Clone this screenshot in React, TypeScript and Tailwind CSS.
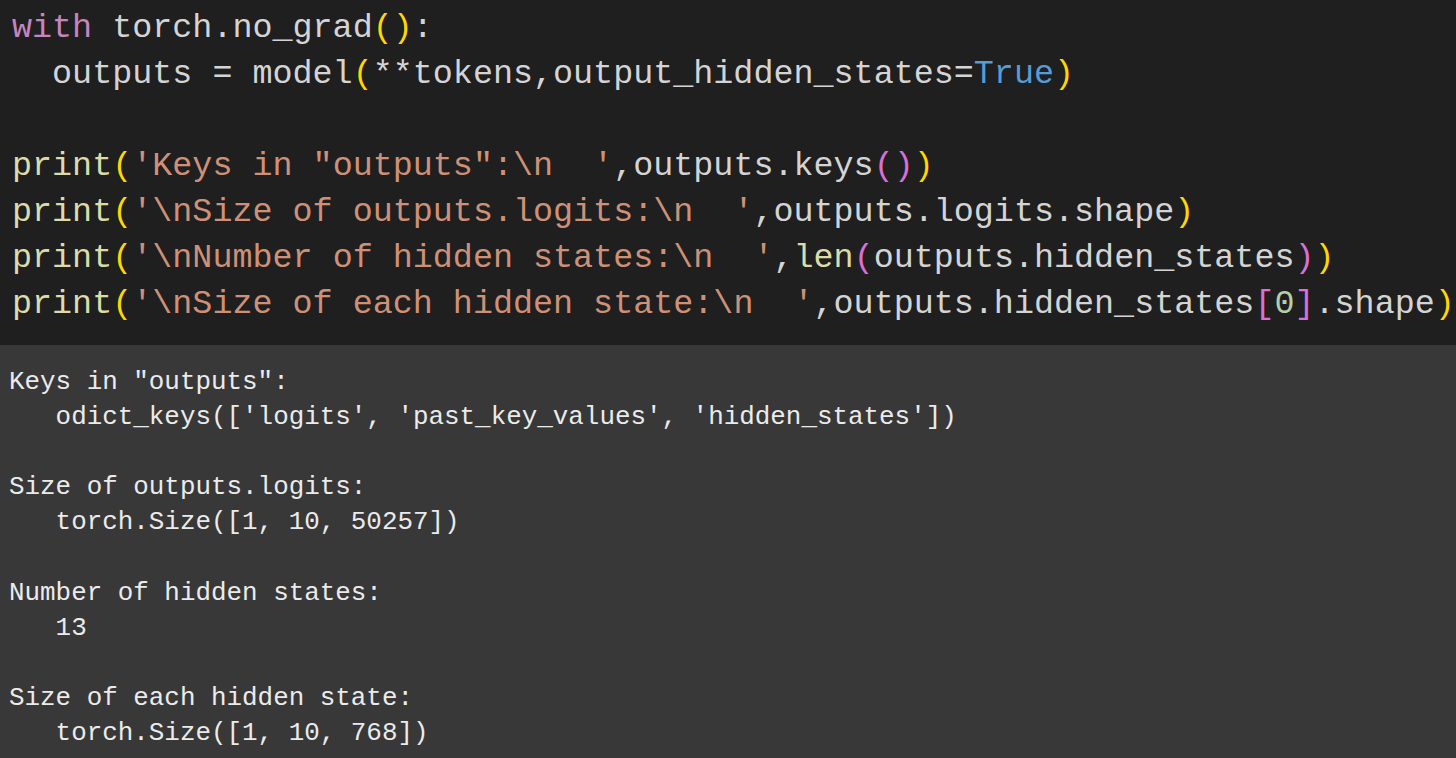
import React from "react";

const Y = "text-[#ffd700]";
const P = "text-[#da70d6]";
const S = "text-[#ce9178]";
const F = "text-[#dcdcaa]";
const K = "text-[#c586c0]";
const B = "text-[#569cd6]";
const N = "text-[#b5cea8]";

export default function App() {
  return (
    <div className="w-[1456px] h-[758px] overflow-hidden flex flex-col bg-[#383838]" style={{ fontFamily: '"Liberation Mono", "DejaVu Sans Mono", monospace' }}>
      <div className="bg-[#1f1f1f] pt-[5px] pl-[12px] h-[345px] shrink-0 text-[#d4d4d4] text-[33.4px] leading-[46px] whitespace-pre">
        <div><span className={K}>with</span> torch.no_grad<span className={Y}>()</span>:</div>
        <div>  outputs = model<span className={Y}>(</span>**tokens,output_hidden_states=<span className={B}>True</span><span className={Y}>)</span></div>
        <div> </div>
        <div><span className={F}>print</span><span className={Y}>(</span><span className={S}>'Keys in "outputs":\n  '</span>,outputs.keys<span className={P}>()</span><span className={Y}>)</span></div>
        <div><span className={F}>print</span><span className={Y}>(</span><span className={S}>'\nSize of outputs.logits:\n  '</span>,outputs.logits.shape<span className={Y}>)</span></div>
        <div><span className={F}>print</span><span className={Y}>(</span><span className={S}>'\nNumber of hidden states:\n  '</span>,<span className={F}>len</span><span className={P}>(</span>outputs.hidden_states<span className={P}>)</span><span className={Y}>)</span></div>
        <div><span className={F}>print</span><span className={Y}>(</span><span className={S}>'\nSize of each hidden state:\n  '</span>,outputs.hidden_states<span className={P}>[</span><span className={N}>0</span><span className={P}>]</span>.shape<span className={Y}>)</span></div>
      </div>
      <div className="pt-[20px] pl-[9px] text-[#ebebeb] text-[25.9px] leading-[35.1px] whitespace-pre">
        <div>Keys in "outputs":</div>
        <div>   odict_keys(['logits', 'past_key_values', 'hidden_states'])</div>
        <div> </div>
        <div>Size of outputs.logits:</div>
        <div>   torch.Size([1, 10, 50257])</div>
        <div> </div>
        <div>Number of hidden states:</div>
        <div>   13</div>
        <div> </div>
        <div>Size of each hidden state:</div>
        <div>   torch.Size([1, 10, 768])</div>
      </div>
    </div>
  );
}
